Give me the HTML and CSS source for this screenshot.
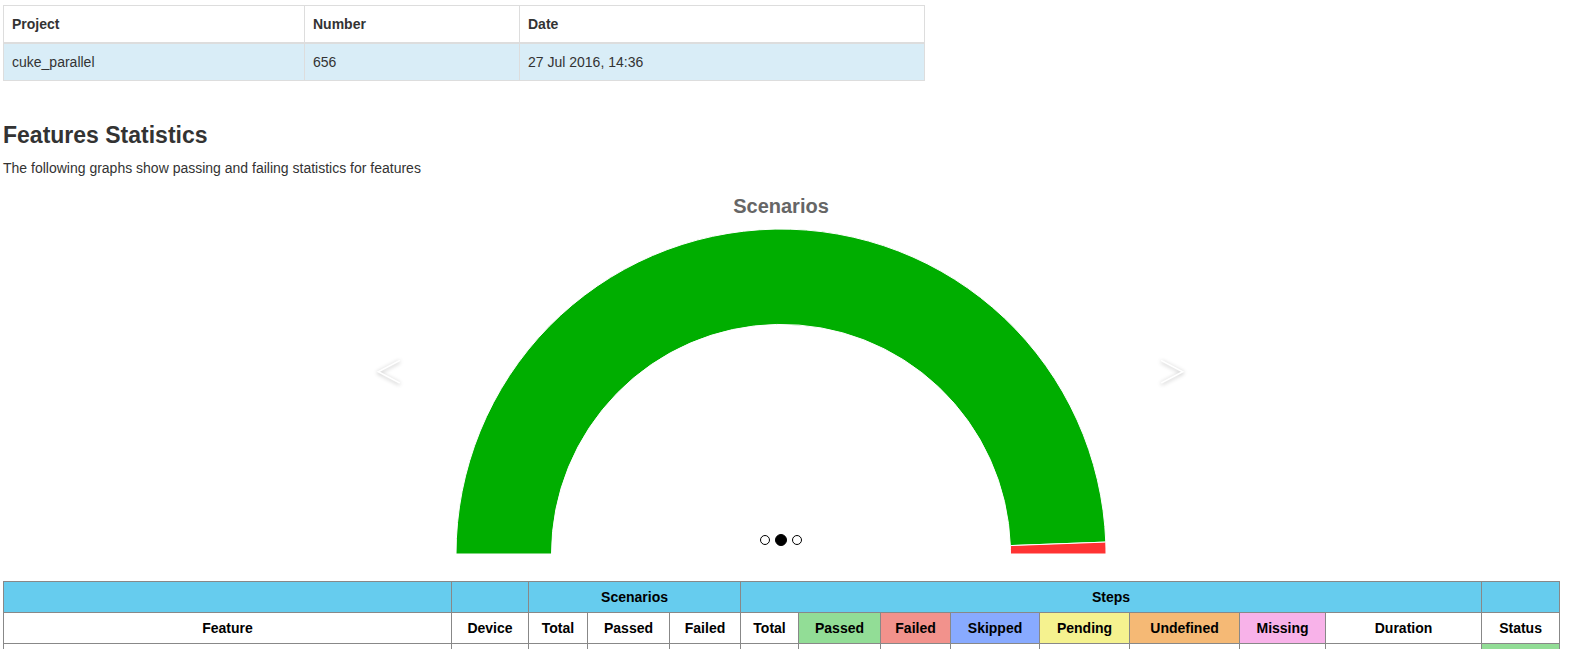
FILE: index.html
```html
<!DOCTYPE html>
<html lang="en">
<head>
<meta charset="utf-8">
<title>Features Statistics</title>
<link rel="stylesheet" href="styles.css">
</head>
<body>
<div class="page">
  <table class="info-table">
    <colgroup>
      <col class="ic-project">
      <col class="ic-number">
      <col class="ic-date">
    </colgroup>
    <thead>
      <tr><th>Project</th><th>Number</th><th>Date</th></tr>
    </thead>
    <tbody>
      <tr><td>cuke_parallel</td><td>656</td><td>27 Jul 2016, 14:36</td></tr>
    </tbody>
  </table>

  <h2 class="section-title">Features Statistics</h2>
  <p class="section-desc">The following graphs show passing and failing statistics for features</p>

  <div class="carousel">
    <div class="chart-title">Scenarios</div>
    <svg class="pie" width="1556" height="347" viewBox="0 0 1556 347" xmlns="http://www.w3.org/2000/svg">
      <path class="slice-passed" d="M 1102.78 324.09 A 325 325 0 0 0 453 336 L 548.5 336 A 229.5 229.5 0 0 1 1007.35 327.59 Z"/>
      <path class="slice-failed" d="M 1103 336 A 325 325 0 0 0 1102.78 324.09 L 1007.35 327.59 A 229.5 229.5 0 0 1 1007.5 336 Z"/>
    </svg>
    <a class="carousel-control control-left" href="#">
      <svg width="26" height="26" viewBox="0 0 26 26" xmlns="http://www.w3.org/2000/svg"><polyline points="23.3,2.7 2.3,13.7 23.3,24.7"/></svg>
    </a>
    <a class="carousel-control control-right" href="#">
      <svg width="26" height="26" viewBox="0 0 26 26" xmlns="http://www.w3.org/2000/svg"><polyline points="2.7,2.7 23.7,13.7 2.7,24.7"/></svg>
    </a>
    <ol class="indicators">
      <li></li>
      <li class="active"></li>
      <li></li>
    </ol>
  </div>

  <table class="stats-table">
    <colgroup>
      <col class="sc-feature">
      <col class="sc-device">
      <col class="sc-s-total">
      <col class="sc-s-passed">
      <col class="sc-s-failed">
      <col class="sc-t-total">
      <col class="sc-t-passed">
      <col class="sc-t-failed">
      <col class="sc-t-skipped">
      <col class="sc-t-pending">
      <col class="sc-t-undefined">
      <col class="sc-t-missing">
      <col class="sc-duration">
      <col class="sc-status">
    </colgroup>
    <thead>
      <tr class="group-row">
        <th></th>
        <th></th>
        <th colspan="3">Scenarios</th>
        <th colspan="8">Steps</th>
        <th></th>
        <th></th>
      </tr>
      <tr class="label-row">
        <th>Feature</th>
        <th>Device</th>
        <th>Total</th>
        <th>Passed</th>
        <th>Failed</th>
        <th>Total</th>
        <th class="passed">Passed</th>
        <th class="failed">Failed</th>
        <th class="skipped">Skipped</th>
        <th class="pending">Pending</th>
        <th class="undefined">Undefined</th>
        <th class="missing">Missing</th>
        <th>Duration</th>
        <th>Status</th>
      </tr>
    </thead>
    <tbody>
      <tr class="body-row">
        <td></td>
        <td></td>
        <td></td>
        <td></td>
        <td></td>
        <td></td>
        <td></td>
        <td></td>
        <td></td>
        <td></td>
        <td></td>
        <td></td>
        <td></td>
        <td class="passed"></td>
      </tr>
    </tbody>
  </table>
</div>
</body>
</html>
```

FILE: styles.css
```css
* {
  box-sizing: border-box;
}

body {
  margin: 0;
  background: #fff;
  color: #333;
  font-family: "Liberation Sans", Arial, Helvetica, sans-serif;
  font-size: 14px;
  line-height: 20px;
}

.page {
  width: 1559px;
  padding: 5px 0 0 3px;
}

/* top info table */
.info-table {
  width: 921px;
  border-collapse: collapse;
  table-layout: fixed;
}

.ic-project { width: 301px; }
.ic-number { width: 215px; }
.ic-date { width: 405px; }

.info-table th,
.info-table td {
  border: 1px solid #ddd;
  padding: 8px;
  text-align: left;
  line-height: 20px;
}

.info-table thead th {
  border-bottom-width: 2px;
  font-weight: bold;
}

.info-table tbody td {
  background: #d9edf7;
}

/* headings */
.section-title {
  margin: 41px 0 0;
  font-size: 23px;
  line-height: 26px;
  font-weight: bold;
  color: #333;
}

.section-desc {
  margin: 10px 0 0;
}

/* carousel with chart */
.carousel {
  position: relative;
  height: 387px;
  margin-top: 16px;
}

.chart-title {
  text-align: center;
  font-size: 20px;
  line-height: 24px;
  font-weight: bold;
  color: #666;
}

.pie {
  display: block;
}

.slice-passed {
  fill: #00ae00;
  stroke: #fff;
  stroke-width: 1;
}

.slice-failed {
  fill: #ff3333;
  stroke: #fff;
  stroke-width: 1;
}

.carousel-control {
  position: absolute;
  top: 164px;
  width: 26px;
  height: 26px;
  opacity: 0.5;
  filter: drop-shadow(0 1px 2px rgba(0, 0, 0, 0.6));
}

.carousel-control svg {
  display: block;
}

.carousel-control polyline {
  fill: none;
  stroke: #fff;
  stroke-width: 1.6;
  stroke-linecap: round;
  stroke-linejoin: miter;
}

.control-left { left: 373px; }
.control-right { left: 1156px; }

.indicators {
  position: absolute;
  left: 0;
  right: 0;
  bottom: 35px;
  margin: 0;
  padding: 0;
  list-style: none;
  display: flex;
  justify-content: center;
  align-items: center;
  gap: 4px;
}

.indicators li {
  width: 10px;
  height: 10px;
  margin: 1px;
  border: 1px solid #000;
  border-radius: 50%;
  background: #fff;
}

.indicators li.active {
  width: 12px;
  height: 12px;
  margin: 0;
  background: #000;
}

/* stats table */
.stats-table {
  width: 1556px;
  border-collapse: collapse;
  table-layout: fixed;
}

.sc-feature { width: 448px; }
.sc-device { width: 77px; }
.sc-s-total { width: 59px; }
.sc-s-passed { width: 82px; }
.sc-s-failed { width: 71px; }
.sc-t-total { width: 58px; }
.sc-t-passed { width: 82px; }
.sc-t-failed { width: 70px; }
.sc-t-skipped { width: 89px; }
.sc-t-pending { width: 90px; }
.sc-t-undefined { width: 110px; }
.sc-t-missing { width: 86px; }
.sc-duration { width: 156px; }
.sc-status { width: 78px; }

.stats-table th,
.stats-table td {
  border: 1px solid #888;
  padding: 5px;
  line-height: 20px;
  text-align: center;
  color: #000;
  background: #fff;
}

.stats-table th {
  font-weight: bold;
}

.stats-table .body-row td {
  height: 31px;
}

.stats-table .group-row th {
  background: #66ccee;
}

.stats-table .passed { background: #92dd96; }
.stats-table .failed { background: #f2928c; }
.stats-table .skipped { background: #88aaff; }
.stats-table .pending { background: #f5f28f; }
.stats-table .undefined { background: #f5b975; }
.stats-table .missing { background: #f8b2e9; }
```
